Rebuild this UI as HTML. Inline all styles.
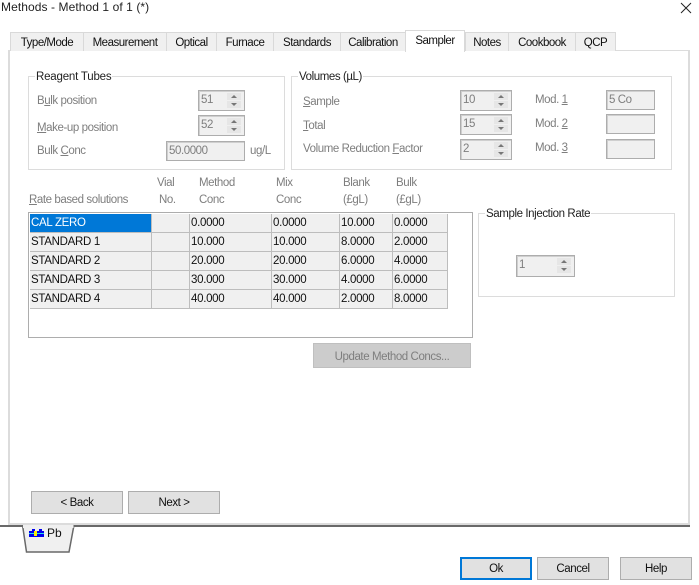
<!DOCTYPE html>
<html><head><meta charset="utf-8">
<style>
html,body{margin:0;padding:0;background:#fff}
#r{position:relative;width:699px;height:585px;overflow:hidden;background:#fff;font:11.5px "Liberation Sans",sans-serif;letter-spacing:-.42px;color:#000}
#r div{position:absolute;box-sizing:border-box;white-space:nowrap}
.t{line-height:14px;height:14px}
.g{color:#7e7e7e}
.tab{top:32px;height:19px;background:#f0f0f0;border:1px solid #d9d9d9;border-bottom:0;text-align:center;line-height:20px;color:#111;letter-spacing:-.5px}
.grp{border:1px solid #dcdcdc}
.lg{background:#fff;padding:0 1px;line-height:14px;height:14px;color:#222;letter-spacing:-.2px}
.f{background:#f0f0f0;border:1px solid #adadad;box-shadow:inset 1px 1px #cfcfcf;color:#7e7e7e;line-height:19px;padding-left:2px}
.b{background:#e1e1e1;border:1px solid #adadad;text-align:center;line-height:22px;color:#111}
.c{background:#f0f0f0;border-right:1px solid #bdbdbd;border-bottom:1px solid #bdbdbd;line-height:18px;padding-left:1px;color:#111;letter-spacing:-.3px}
.su{width:14px;height:7px;background:#e6e6e6}
.su:after{content:"";position:absolute;left:4px;top:2px;border:3px solid transparent;border-top:0;border-bottom:3px solid #777}
.sd{width:14px;height:7px;background:#e6e6e6}
.sd:after{content:"";position:absolute;left:4px;top:2px;border:3px solid transparent;border-bottom:0;border-top:3px solid #777}
u{text-decoration:underline}
</style></head><body><div id="r">
<div class="t" style="left:1px;top:0;font-size:12px;letter-spacing:.08px;color:#222">Methods - Method 1 of 1 (*)</div>
<svg style="position:absolute;left:680px;top:2px" width="12" height="12"><path d="M1 1L11 11M11 1L1 11" stroke="#222" stroke-width="1" fill="none"/></svg>

<div style="left:8px;top:50px;width:682px;height:475px;border:1px solid #dcdcdc;border-width:1px 2px 2px 2px;background:#fff"></div>
<div style="left:0;top:525px;width:690px;height:2px;background:#696969"></div>

<div class="tab" style="left:10px;width:74px">Type/Mode</div>
<div class="tab" style="left:83px;width:84px">Measurement</div>
<div class="tab" style="left:166px;width:51px">Optical</div>
<div class="tab" style="left:216px;width:58px">Furnace</div>
<div class="tab" style="left:273px;width:68px">Standards</div>
<div class="tab" style="left:340px;width:66px">Calibration</div>
<div class="tab" style="left:465px;width:44px">Notes</div>
<div class="tab" style="left:508px;width:68px">Cookbook</div>
<div class="tab" style="left:575px;width:41px">QCP</div>
<div class="tab" style="left:405px;top:30px;width:60px;height:22px;background:#fff;line-height:20px;z-index:2">Sampler</div>

<!-- Reagent -->
<div class="grp" style="left:28px;top:76px;width:257px;height:94px"></div>
<div class="lg" style="left:35px;top:70px;line-height:15px">Reagent Tubes</div>
<div class="t g" style="left:37px;top:94px">B<u>u</u>lk position</div>
<div class="t g" style="left:37px;top:121px"><u>M</u>ake-up position</div>
<div class="t g" style="left:37px;top:144px">Bulk <u>C</u>onc</div>
<div class="f" style="left:198px;top:90px;width:47px;height:21px">51</div>
<div class="su" style="left:227px;top:93px"></div><div class="sd" style="left:227px;top:101px"></div>
<div class="f" style="left:198px;top:115px;width:47px;height:21px">52</div>
<div class="su" style="left:227px;top:118px"></div><div class="sd" style="left:227px;top:126px"></div>
<div class="f" style="left:166px;top:141px;width:79px;height:20px">50.0000</div>
<div class="t g" style="left:250px;top:144px">ug/L</div>

<!-- Volumes -->
<div class="grp" style="left:291px;top:76px;width:381px;height:94px"></div>
<div class="lg" style="left:298px;top:70px;line-height:15px;letter-spacing:-.42px">Volumes (µL)</div>
<div class="t g" style="left:303px;top:95px"><u>S</u>ample</div>
<div class="t g" style="left:303px;top:119px"><u>T</u>otal</div>
<div class="t g" style="left:303px;top:142px">Volume Reduction <u>F</u>actor</div>
<div class="f" style="left:460px;top:90px;width:52px;height:21px">10</div>
<div class="su" style="left:494px;top:93px"></div><div class="sd" style="left:494px;top:101px"></div>
<div class="f" style="left:460px;top:114px;width:52px;height:21px">15</div>
<div class="su" style="left:494px;top:117px"></div><div class="sd" style="left:494px;top:125px"></div>
<div class="f" style="left:460px;top:139px;width:52px;height:21px">2</div>
<div class="su" style="left:494px;top:142px"></div><div class="sd" style="left:494px;top:150px"></div>
<div class="t g" style="left:535px;top:93px">Mod. <u>1</u></div>
<div class="t g" style="left:535px;top:117px">Mod. <u>2</u></div>
<div class="t g" style="left:535px;top:141px">Mod. <u>3</u></div>
<div class="f" style="left:606px;top:90px;width:49px;height:20px">5 Co</div>
<div class="f" style="left:606px;top:114px;width:49px;height:20px"></div>
<div class="f" style="left:606px;top:139px;width:49px;height:20px"></div>

<!-- headers -->
<div class="t g" style="left:29px;top:193px"><u>R</u>ate based solutions</div>
<div class="t g" style="left:157px;top:176px">Vial</div>
<div class="t g" style="left:159px;top:193px">No.</div>
<div class="t g" style="left:199px;top:176px">Method</div>
<div class="t g" style="left:199px;top:193px">Conc</div>
<div class="t g" style="left:276px;top:176px">Mix</div>
<div class="t g" style="left:276px;top:193px">Conc</div>
<div class="t g" style="left:343px;top:176px">Blank</div>
<div class="t g" style="left:343px;top:193px">(£gL)</div>
<div class="t g" style="left:396px;top:176px">Bulk</div>
<div class="t g" style="left:396px;top:193px">(£gL)</div>

<!-- grid -->
<div style="left:28px;top:212px;width:445px;height:126px;border:1px solid #adadad;background:#fff"></div>
<div class="c" style="left:30px;top:214px;width:122px;height:19px;background:#0078d7;color:#fff;border-right-color:#bdbdbd">CAL ZERO</div>
<div class="c" style="left:152px;top:214px;width:38px;height:19px"></div>
<div class="c" style="left:190px;top:214px;width:82px;height:19px">0.0000</div>
<div class="c" style="left:272px;top:214px;width:68px;height:19px">0.0000</div>
<div class="c" style="left:340px;top:214px;width:53px;height:19px">10.000</div>
<div class="c" style="left:393px;top:214px;width:55px;height:19px">0.0000</div>

<div class="c" style="left:30px;top:233px;width:122px;height:19px">STANDARD 1</div>
<div class="c" style="left:152px;top:233px;width:38px;height:19px"></div>
<div class="c" style="left:190px;top:233px;width:82px;height:19px">10.000</div>
<div class="c" style="left:272px;top:233px;width:68px;height:19px">10.000</div>
<div class="c" style="left:340px;top:233px;width:53px;height:19px">8.0000</div>
<div class="c" style="left:393px;top:233px;width:55px;height:19px">2.0000</div>

<div class="c" style="left:30px;top:252px;width:122px;height:19px">STANDARD 2</div>
<div class="c" style="left:152px;top:252px;width:38px;height:19px"></div>
<div class="c" style="left:190px;top:252px;width:82px;height:19px">20.000</div>
<div class="c" style="left:272px;top:252px;width:68px;height:19px">20.000</div>
<div class="c" style="left:340px;top:252px;width:53px;height:19px">6.0000</div>
<div class="c" style="left:393px;top:252px;width:55px;height:19px">4.0000</div>

<div class="c" style="left:30px;top:271px;width:122px;height:19px">STANDARD 3</div>
<div class="c" style="left:152px;top:271px;width:38px;height:19px"></div>
<div class="c" style="left:190px;top:271px;width:82px;height:19px">30.000</div>
<div class="c" style="left:272px;top:271px;width:68px;height:19px">30.000</div>
<div class="c" style="left:340px;top:271px;width:53px;height:19px">4.0000</div>
<div class="c" style="left:393px;top:271px;width:55px;height:19px">6.0000</div>

<div class="c" style="left:30px;top:290px;width:122px;height:19px">STANDARD 4</div>
<div class="c" style="left:152px;top:290px;width:38px;height:19px"></div>
<div class="c" style="left:190px;top:290px;width:82px;height:19px">40.000</div>
<div class="c" style="left:272px;top:290px;width:68px;height:19px">40.000</div>
<div class="c" style="left:340px;top:290px;width:53px;height:19px">2.0000</div>
<div class="c" style="left:393px;top:290px;width:55px;height:19px">8.0000</div>

<div class="b" style="left:313px;top:343px;width:158px;height:25px;background:#cccccc;border-color:#bfbfbf;color:#7e7e7e;line-height:26px">Update Method Concs...</div>

<!-- injection -->
<div class="grp" style="left:478px;top:213px;width:197px;height:84px"></div>
<div class="lg" style="left:485px;top:207px;line-height:15px;letter-spacing:-.4px">Sample Injection Rate</div>
<div class="f" style="left:516px;top:255px;width:59px;height:22px">1</div>
<div class="su" style="left:557px;top:258px"></div><div class="sd" style="left:557px;top:266px"></div>

<div class="b" style="left:31px;top:491px;width:92px;height:23px">&lt; Back</div>
<div class="b" style="left:128px;top:491px;width:92px;height:23px">Next &gt;</div>

<!-- bottom tab -->
<svg style="position:absolute;left:18px;top:522px" width="60" height="34">
<path d="M4.500 3L8.500 30H51L56 3Z" fill="#f0f0f0"/>
<path d="M4.500 3L8.500 30H51L56 3" fill="none" stroke="#696969" stroke-width="1.500"/>
<rect x="5" y="3" width="50.500" height="3" fill="#f0f0f0"/>
<rect x="11" y="9" width="15" height="6" fill="#0000ee"/>
<rect x="14" y="7" width="3" height="2" fill="#0000ee"/>
<rect x="21" y="7" width="3" height="2" fill="#0000ee"/>
<rect x="11" y="11" width="15" height="1" fill="#27e0e0"/>
<rect x="16" y="9" width="3" height="5" fill="#ffee00"/>
</svg>
<div class="t" style="left:47px;top:526px;font-size:12px;letter-spacing:0;color:#111">Pb</div>

<div class="b" style="left:460px;top:557px;width:72px;height:23px;border:2px solid #0078d7;line-height:20px">Ok</div>
<div class="b" style="left:537px;top:557px;width:72px;height:23px">Cancel</div>
<div class="b" style="left:620px;top:557px;width:72px;height:23px">Help</div>
</div></body></html>
